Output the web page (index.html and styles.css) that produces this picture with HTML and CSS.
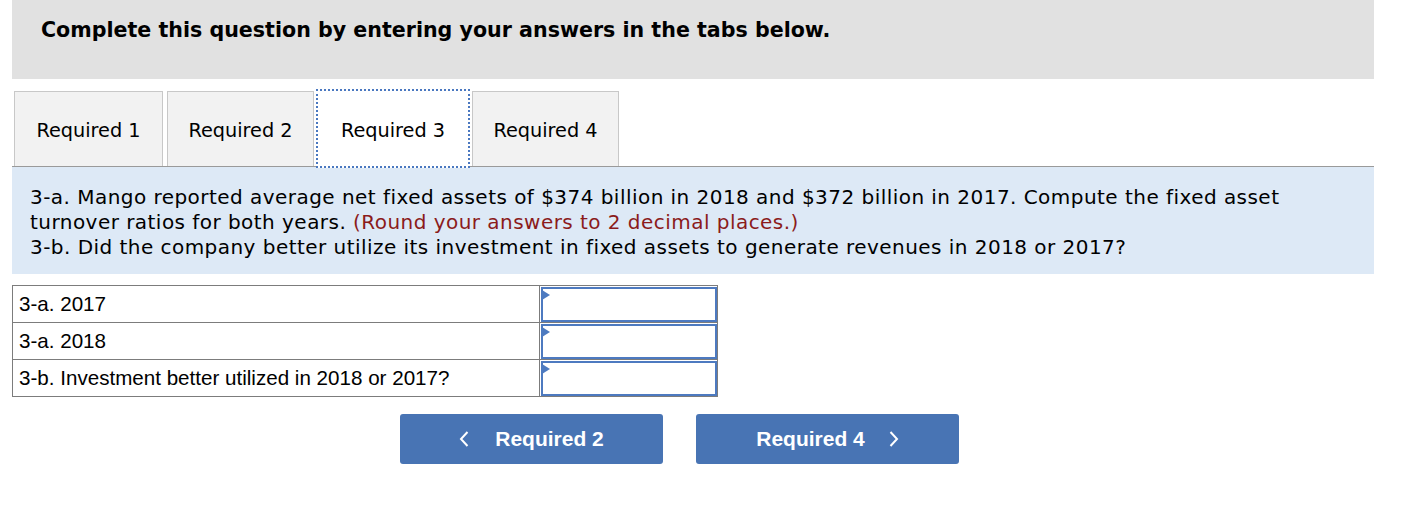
FILE: index.html
```html
<!DOCTYPE html>
<html>
<head>
<meta charset="utf-8">
<link rel="stylesheet" href="styles.css">
</head>
<body>
<div class="page">
  <div class="header">Complete this question by entering your answers in the tabs below.</div>
  <div class="tabs">
    <div class="tab">Required 1</div>
    <div class="tab">Required 2</div>
    <div class="tab active">Required 3</div>
    <div class="tab">Required 4</div>
  </div>
  <div class="question">
    3-a. Mango reported average net fixed assets of $374 billion in 2018 and $372 billion in 2017. Compute the fixed asset turnover ratios for both years. <span class="note">(Round your answers to 2 decimal places.)</span><br>
    3-b. Did the company better utilize its investment in fixed assets to generate revenues in 2018 or 2017?
  </div>
  <table class="answers">
    <tr><td class="label">3-a. 2017</td><td class="cell"><div class="input"></div></td></tr>
    <tr><td class="label">3-a. 2018</td><td class="cell"><div class="input"></div></td></tr>
    <tr><td class="label">3-b. Investment better utilized in 2018 or 2017?</td><td class="cell"><div class="input"></div></td></tr>
  </table>
  <div class="nav">
    <div class="btn"><svg class="chev" width="10" height="16" viewBox="0 0 10 16"><polyline points="8.5,1 2,8 8.5,15" fill="none" stroke="#fff" stroke-width="2"/></svg>Required 2</div>
    <div class="btn">Required 4<svg class="chev right" width="10" height="16" viewBox="0 0 10 16"><polyline points="1.5,1 8,8 1.5,15" fill="none" stroke="#fff" stroke-width="2"/></svg></div>
  </div>
</div>
</body>
</html>
```
FILE: styles.css
```css
* { box-sizing: border-box; }
body { margin: 0; background: #fff; }
.page { padding: 0 36px 0 12px; width: 1410px; }
.header {
  background: #e1e1e1;
  height: 79px;
  padding: 18px 0 0 29px;
  font-family: "DejaVu Sans", Verdana, sans-serif;
  font-weight: bold;
  font-size: 20.6px;
  line-height: 24px;
  color: #000;
  width: 1362px;
}
.tabs {
  display: flex;
  margin-top: 12px;
  padding-left: 2px;
  border-bottom: 1px solid #9a9a9a;
  width: 1362px;
  height: 76px;
}
.tab {
  font-family: "DejaVu Sans", Verdana, sans-serif;
  font-size: 19.3px;
  color: #000;
  background: #f2f2f2;
  border: 1px solid #c8c8c8;
  border-bottom: none;
  height: 75px;
  padding-top: 3px;
  display: flex;
  align-items: center;
  justify-content: center;
  width: 149px;
  margin-right: 4px;
}
.tab:nth-child(2) { width: 147px; margin-right: 2px; }
.tab.active {
  background: #fff;
  border: 2px dotted #4a78c0;
  width: 154px;
  height: 79px;
  padding-top: 4px;
  margin-top: -2px;
  margin-right: 2px;
  position: relative;
  z-index: 1;
}
.tab:last-child { width: 147px; }
.question {
  background: #dde9f6;
  width: 1362px;
  height: 107px;
  padding: 18px 60px 0 18px;
  font-family: "DejaVu Sans", Verdana, sans-serif;
  font-size: 20px;
  letter-spacing: 0.46px;
  line-height: 25px;
  color: #000;
}
.note { color: #8b1b1b; }
.answers {
  margin-top: 11px;
  border-collapse: collapse;
  font-family: "Liberation Sans", Arial, sans-serif;
  font-size: 20.6px;
  color: #000;
}
.answers td { border: 1px solid #7c7c7c; height: 37px; padding: 0; }
.answers .label { width: 527px; padding-left: 6px; }
.answers .cell { width: 178px; padding: 0; }
.input {
  position: relative;
  height: 35px;
  margin: 0 0 0 1px;
  border: 2px solid #4d7ac0;
  background: #fff;
}
.input::before {
  content: "";
  position: absolute;
  left: -1px;
  top: 1px;
  border-left: 8px solid #4d7ac0;
  border-top: 5px solid transparent;
  border-bottom: 5px solid transparent;
}
.nav {
  display: flex;
  gap: 33px;
  margin: 17px 0 0 388px;
}
.btn {
  width: 263px;
  height: 50px;
  background: #4874b4;
  border-radius: 3px;
  color: #fff;
  font-family: "Liberation Sans", Arial, sans-serif;
  font-weight: bold;
  font-size: 21px;
  display: flex;
  align-items: center;
  justify-content: center;
}
.chev { margin-right: 26px; }
.chev.right { margin-right: 0; margin-left: 24px; }
```
